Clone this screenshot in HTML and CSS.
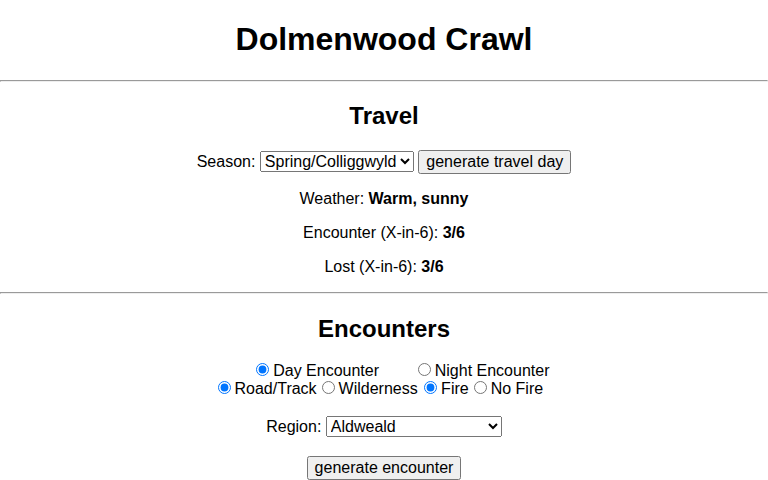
FILE: index.html
```html
<!DOCTYPE html>
<html lang="en">
<head>
<meta charset="utf-8">
<title>Dolmenwood Crawl</title>
<link rel="stylesheet" href="styles.css">
</head>
<body>
  <h1>Dolmenwood Crawl</h1>
  <hr>
  <section class="panel">
    <h2>Travel</h2>
    <p>
      <label for="season">Season:</label>
      <select id="season">
        <option>Winter</option>
        <option selected>Spring/Colliggwyld</option>
        <option>Summer</option>
        <option>Autumn</option>
      </select>
      <button type="button">generate travel day</button>
    </p>
    <p>Weather: <b>Warm, sunny</b></p>
    <p>Encounter (X-in-6): <b>3/6</b></p>
    <p>Lost (X-in-6): <b>3/6</b></p>
  </section>
  <hr>
  <section class="panel">
    <h2 class="encounters-title">Encounters</h2>
    <div class="options">
      <label><input type="radio" name="time" checked>Day Encounter</label>
      <label class="second"><input type="radio" name="time">Night Encounter</label>
      <span><label><input type="radio" name="terrain" checked>Road/Track</label><label><input type="radio" name="terrain">Wilderness</label></span>
      <span class="second"><label><input type="radio" name="fire" checked>Fire</label><label><input type="radio" name="fire">No Fire</label></span>
    </div>
    <p class="form-row region-row">
      <label for="region">Region:</label>
      <select id="region">
        <option selected>Aldweald</option>
        <option>Aquatic</option>
        <option>Dwelmfurgh</option>
        <option>Fever Marsh</option>
        <option>Hag's Addle</option>
        <option>High Wold</option>
        <option>Mulchgrove</option>
        <option>Nagwood</option>
        <option>Northern Scratch</option>
        <option>Table Downs</option>
        <option>Tithelands</option>
        <option>Valley of Wise Beasts</option>
      </select>
    </p>
    <p class="form-row"><button type="button">generate encounter</button></p>
  </section>
</body>
</html>
```

FILE: styles.css
```css
body {
  margin: 0;
  font-family: "Liberation Sans", Arial, sans-serif;
  font-size: 16px;
  color: #000;
  background: #fff;
  text-align: center;
}

h1 {
  font-size: 32px;
  margin: 21.44px 0;
}

h2 {
  font-size: 24px;
  margin: 19.92px 0;
}

.encounters-title {
  margin: 21px 0 19px;
}

p {
  margin: 16px 0;
}

select,
button {
  font-family: inherit;
  font-size: 16px;
}

/* two columns of radio groups, each cell centred */
.options {
  display: grid;
  grid-template-columns: auto auto;
  justify-content: center;
  justify-items: center;
  margin: 16px 0;
  padding-right: 6px;
  line-height: 18px;
}

.options .second {
  margin-left: -5px;
}

.options input[type="radio"] {
  margin: 0 4px 0 5px;
}

.form-row {
  margin: 19px 0;
}

.region-row {
  margin-top: 18px;
}
</style>
```
